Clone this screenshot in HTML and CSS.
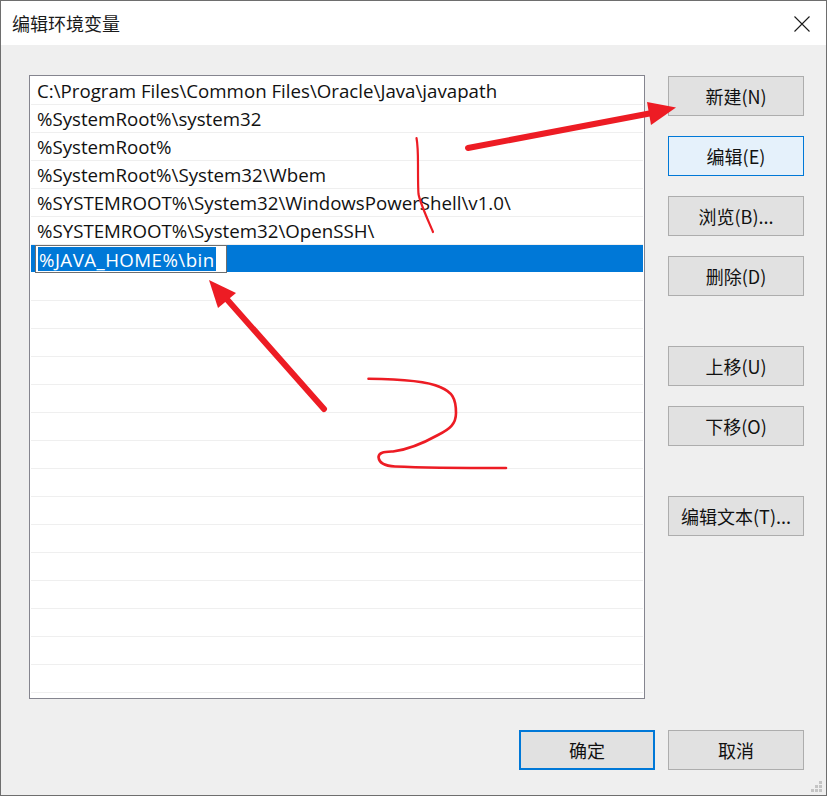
FILE: index.html
```html
<!DOCTYPE html>
<html lang="zh-CN">
<head>
<meta charset="utf-8">
<title>编辑环境变量</title>
<link rel="stylesheet" href="styles.css">
</head>
<body>
<div class="window">
  <header class="titlebar">
    <span class="title">编辑环境变量</span>
    <svg class="close" width="16" height="16" viewBox="0 0 16 16"><path d="M.5.5l15 15M15.500.5l-15 15" fill="none" stroke="#1a1a1a" stroke-width="1.1"/></svg>
  </header>
  <main class="content">
    <div class="upper">
      <div class="list">
        <div class="row">C:\Program Files\Common Files\Oracle\Java\javapath</div>
        <div class="row">%SystemRoot%\system32</div>
        <div class="row">%SystemRoot%</div>
        <div class="row">%SystemRoot%\System32\Wbem</div>
        <div class="row">%SYSTEMROOT%\System32\WindowsPowerShell\v1.0\</div>
        <div class="row">%SYSTEMROOT%\System32\OpenSSH\</div>
        <div class="row selected"><span class="editor"><span class="selection">%JAVA_HOME%\bin</span></span></div>
        <div class="row"></div><div class="row"></div><div class="row"></div><div class="row"></div>
        <div class="row"></div><div class="row"></div><div class="row"></div><div class="row"></div>
        <div class="row"></div><div class="row"></div><div class="row"></div><div class="row"></div>
        <div class="row"></div><div class="row"></div><div class="row"></div>
      </div>
      <div class="side">
        <div class="group">
          <button class="btn">新建(N)</button>
          <button class="btn hover">编辑(E)</button>
          <button class="btn">浏览(B)...</button>
          <button class="btn">删除(D)</button>
        </div>
        <div class="group">
          <button class="btn">上移(U)</button>
          <button class="btn">下移(O)</button>
        </div>
        <div class="group">
          <button class="btn">编辑文本(T)...</button>
        </div>
      </div>
    </div>
    <div class="actions">
      <button class="btn default">确定</button>
      <button class="btn">取消</button>
    </div>
  </main>
  <svg class="grip" width="12" height="12" viewBox="0 0 12 12"><path d="M8 0h3v3H8zM4 4h3v3H4zM8 4h3v3H8zM0 8h3v3H0zM4 8h3v3H4zM8 8h3v3H8z" fill="#c4c4c4"/></svg>
</div>
<svg class="marks" width="827" height="796" viewBox="0 0 827 796">
  <path d="M468 148L652 113" fill="none" stroke="#ed1c24" stroke-width="6" stroke-linecap="round"/>
  <path d="M676 107.500L647 102L651 125Z" fill="#ed1c24"/>
  <path d="M324 409L224 296" fill="none" stroke="#ed1c24" stroke-width="6" stroke-linecap="round"/>
  <path d="M209 280L236 293L218 308Z" fill="#ed1c24"/>
  <path d="M416.500 138C418 146 418 152 418 165C418 178 418 188 418.500 194C420 203 428 220 433 232" fill="none" stroke="#ed1c24" stroke-width="2.200" stroke-linecap="round"/>
  <path d="M368.500 378.700C395 379 425 380 440 387C452 392 456 398 456 413C456 424 450 429 438 435C420 445 405 450 393 451.500C384 452 379 452 378.500 457C379 462 384 466 395 466.500C430 468 470 468 506 468" fill="none" stroke="#ed1c24" stroke-width="2.600" stroke-linecap="round"/>
</svg>
</body>
</html>
```
FILE: styles.css
```css
* { box-sizing: border-box; }
html, body { margin: 0; padding: 0; }
body {
  width: 827px;
  height: 796px;
  overflow: hidden;
  position: relative;
  font-family: "Open Sans", "Noto Sans CJK SC", sans-serif;
  color: #111;
}
.window {
  width: 827px;
  height: 796px;
  border: 1px solid #6e6e6e;
  display: flex;
  flex-direction: column;
  position: relative;
  background: #efefef;
}
.titlebar {
  height: 44px;
  flex: none;
  background: #fff;
  display: flex;
  align-items: center;
  justify-content: space-between;
  padding: 0 16px 0 11px;
}
.title {
  font-family: "Noto Sans CJK SC", sans-serif;
  font-size: 18px;
  color: #1a1a1a;
}
.close { flex: none; margin-top: 1px; }
.content {
  flex: 1;
  display: flex;
  flex-direction: column;
  padding: 30px 22px 25px 28px;
}
.upper {
  display: flex;
  justify-content: space-between;
  align-items: flex-start;
}
.list {
  width: 616px;
  height: 624px;
  background: #fff;
  border: 1px solid #85858f;
  padding: 1px;
  overflow: hidden;
}
.row {
  height: 28px;
  padding-left: 6px;
  font-size: 18.700px;
  line-height: 27px;
  white-space: nowrap;
  border-bottom: 1px solid #efefef;
  color: #111;
}
.selected {
  background: #0078d7;
  border-bottom: 1px solid #fff;
  padding-left: 4px;
}
.editor {
  display: block;
  width: 192px;
  height: 28px;
  background: #fff;
  border: 1px solid #6e6e6e;
  padding: 1px 0 0 2px;
}
.selection {
  display: block;
  width: 178px;
  height: 24px;
  line-height: 25px;
  background: #0078d7;
  color: #fff;
  letter-spacing: 0.45px;
  padding-left: 1px;
}
.side {
  display: flex;
  flex-direction: column;
  gap: 50px;
  margin-top: 1px;
}
.group {
  display: flex;
  flex-direction: column;
  gap: 20px;
}
.btn {
  width: 136px;
  height: 40px;
  padding: 0 0 1px;
  background: #e1e1e1;
  border: 1px solid #adadad;
  font-family: "Noto Sans CJK SC", "Open Sans", sans-serif;
  font-size: 18px;
  line-height: 24px;
  color: #111;
}
.hover {
  background: #e5f1fb;
  border-color: #0078d7;
}
.default {
  border: 2px solid #0078d7;
}
.actions {
  margin-top: auto;
  display: flex;
  justify-content: flex-end;
  gap: 13px;
}
.grip {
  position: absolute;
  right: 3px;
  bottom: 2px;
}
.marks {
  position: absolute;
  left: 0;
  top: 0;
  pointer-events: none;
}
```
